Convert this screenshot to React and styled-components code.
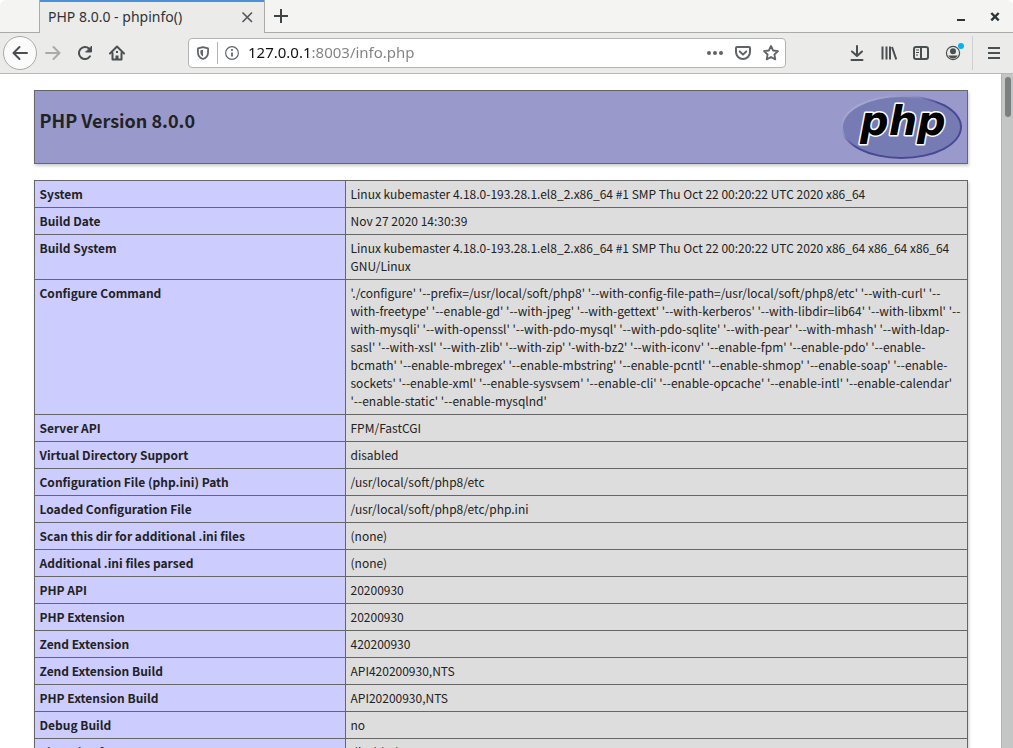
import React, { useState } from "react";
import styled, { createGlobalStyle } from "styled-components";

const rows = [
  ["System", "Linux kubemaster 4.18.0-193.28.1.el8_2.x86_64 #1 SMP Thu Oct 22 00:20:22 UTC 2020 x86_64"],
  ["Build Date", "Nov 27 2020 14:30:39"],
  ["Build System", "Linux kubemaster 4.18.0-193.28.1.el8_2.x86_64 #1 SMP Thu Oct 22 00:20:22 UTC 2020 x86_64 x86_64 x86_64 GNU/Linux"],
  [
    "Configure Command",
    "'./configure' '--prefix=/usr/local/soft/php8' '--with-config-file-path=/usr/local/soft/php8/etc' '--with-curl' '--with-freetype' '--enable-gd' '--with-jpeg' '--with-gettext' '--with-kerberos' '--with-libdir=lib64' '--with-libxml' '--with-mysqli' '--with-openssl' '--with-pdo-mysql' '--with-pdo-sqlite' '--with-pear' '--with-mhash' '--with-ldap-sasl' '--with-xsl' '--with-zlib' '--with-zip' '-with-bz2' '--with-iconv' '--enable-fpm' '--enable-pdo' '--enable-bcmath' '--enable-mbregex' '--enable-mbstring' '--enable-pcntl' '--enable-shmop' '--enable-soap' '--enable-sockets' '--enable-xml' '--enable-sysvsem' '--enable-cli' '--enable-opcache' '--enable-intl' '--enable-calendar' '--enable-static' '--enable-mysqlnd'",
  ],
  ["Server API", "FPM/FastCGI"],
  ["Virtual Directory Support", "disabled"],
  ["Configuration File (php.ini) Path", "/usr/local/soft/php8/etc"],
  ["Loaded Configuration File", "/usr/local/soft/php8/etc/php.ini"],
  ["Scan this dir for additional .ini files", "(none)"],
  ["Additional .ini files parsed", "(none)"],
  ["PHP API", "20200930"],
  ["PHP Extension", "20200930"],
  ["Zend Extension", "420200930"],
  ["Zend Extension Build", "API420200930,NTS"],
  ["PHP Extension Build", "API20200930,NTS"],
  ["Debug Build", "no"],
  ["Thread Safety", "disabled"],
];

function Icon({ size = 16, children, ...rest }) {
  return (
    <svg width={size} height={size} viewBox="0 0 16 16" fill="none" stroke="currentColor" strokeWidth="2" strokeLinecap="round" strokeLinejoin="round" aria-hidden="true" {...rest}>
      {children}
    </svg>
  );
}

function PhpLogo() {
  return (
    <svg width="121" height="64" viewBox="0 0 121 64" role="img" aria-label="PHP logo">
      <defs>
        <linearGradient id="rim" x1="0.2" y1="0" x2="0.8" y2="0.6">
          <stop offset="0" stopColor="#aeb2d5" />
          <stop offset="0.35" stopColor="#8f93c4" />
          <stop offset="0.6" stopColor="#484893" />
          <stop offset="1" stopColor="#484893" />
        </linearGradient>
      </defs>
      <ellipse cx="60.5" cy="32" rx="60.5" ry="32" fill="url(#rim)" />
      <ellipse cx="60.5" cy="32" rx="58.5" ry="30" fill="#777bb3" />
      <LogoText x="19" y="40">php</LogoText>
    </svg>
  );
}

function App() {
  const [url, setUrl] = useState("127.0.0.1:8003/info.php");

  return (
    <Window>
      <GlobalStyle />
      <TabBar>
        <Tab>
          <TabTitle>PHP 8.0.0 - phpinfo()</TabTitle>
          <CloseTab aria-label="Close tab">
            <Icon strokeWidth="1.7"><path d="M4 4l8.500 8.500M12.500 4L4 12.500" /></Icon>
          </CloseTab>
        </Tab>
        <NewTab aria-label="New tab">
          <Icon strokeLinecap="butt"><path d="M8 1v14M1 8h14" /></Icon>
        </NewTab>
        <WindowButtons>
          <TabButton aria-label="Minimize">
            <Icon strokeLinecap="butt"><path d="M4 12h8" /></Icon>
          </TabButton>
          <TabButton aria-label="Close window">
            <Icon strokeLinecap="butt" strokeWidth="2.4"><path d="M4.300 5l7.400 7.400M11.700 5l-7.400 7.400" /></Icon>
          </TabButton>
        </WindowButtons>
      </TabBar>

      <Toolbar>
        <BackButton aria-label="Back">
          <Icon><path d="M15 8H2M7.500 2L1.500 8l6 6" /></Icon>
        </BackButton>
        <ToolButton aria-label="Forward" disabled>
          <Icon><path d="M1 8h13M8.500 2l6 6-6 6" /></Icon>
        </ToolButton>
        <ToolButton aria-label="Reload">
          <Icon>
            <path d="M13 11.300A6 6 0 1 1 12.200 3.800" />
            <path d="M14.500 1.500v5.500h-5.500z" fill="currentColor" strokeWidth="1" />
          </Icon>
        </ToolButton>
        <ToolButton aria-label="Home">
          <Icon>
            <path d="M1 8.500L8 1.500l7 7" />
            <path d="M3.500 8v6.500h9V8" />
            <path d="M8 14v-3.500" strokeWidth="3" strokeLinecap="butt" />
            <path d="M8 6v2" strokeLinecap="butt" />
          </Icon>
        </ToolButton>
        <UrlBar>
          <UrlButton aria-label="Tracking protection">
            <Icon size={14}>
              <path d="M8 1.200L13.800 2.800V7c0 4-2.300 6.500-5.800 7.800C4.500 13.500 2.200 11 2.200 7V2.800z" />
              <path d="M8 4.200L5 5v2c0 2.300 1.200 4 3 5z" fill="currentColor" stroke="none" />
            </Icon>
          </UrlButton>
          <Divider $height={22} />
          <UrlButton aria-label="Site information">
            <Icon size={14} strokeWidth="1.300">
              <circle cx="8" cy="8" r="7.300" />
              <path d="M8 7.500v4.500" strokeWidth="2" strokeLinecap="butt" />
              <circle cx="8" cy="4.600" r="1.200" fill="currentColor" stroke="none" />
            </Icon>
          </UrlButton>
          <UrlInput aria-label="Address" spellCheck="false" value={url} onChange={(e) => setUrl(e.target.value)} />
          <UrlButton aria-label="Page actions">
            <Icon fill="currentColor" stroke="none">
              <circle cx="2" cy="8" r="2" />
              <circle cx="8" cy="8" r="2" />
              <circle cx="14" cy="8" r="2" />
            </Icon>
          </UrlButton>
          <UrlButton aria-label="Save to Pocket">
            <Icon>
              <path d="M2 2h12c.600 0 1 .400 1 1v4a7 7 0 0 1-14 0V3c0-.600.400-1 1-1z" />
              <path d="M4.800 6.500L8 9.600l3.200-3.100" />
            </Icon>
          </UrlButton>
          <UrlButton aria-label="Bookmark this page">
            <Icon strokeWidth="1.800">
              <path d="M8 1l2.100 4.500 4.900.600-3.600 3.400.900 4.900L8 12l-4.300 2.400.900-4.900L1 6.100l4.900-.600z" />
            </Icon>
          </UrlButton>
        </UrlBar>
        <ToolButton aria-label="Downloads">
          <Icon>
            <path d="M8 1v10M3 6.500L8 11l5-4.500M2.500 15h11" />
          </Icon>
        </ToolButton>
        <ToolButton aria-label="Library">
          <Icon strokeLinecap="butt">
            <path d="M1.500 1.500v13M5.500 1.500v13M9 1.500v13M11 2l4.300 12.500" />
          </Icon>
        </ToolButton>
        <ToolButton aria-label="Sidebars">
          <Icon>
            <rect x="1" y="2" width="14" height="12" rx="2" />
            <path d="M8 2v12" strokeLinecap="butt" />
            <path d="M3 5h3M3 7.500h3M3 10h2" strokeWidth="1" strokeLinecap="butt" />
          </Icon>
        </ToolButton>
        <ToolButton aria-label="Account">
          <Icon strokeWidth="1.200">
            <circle cx="8" cy="8" r="6.600" />
            <circle cx="8" cy="6.200" r="3" fill="currentColor" stroke="none" />
            <path d="M3.300 10.500h9.400c-1 1.900-2.600 3-4.700 3s-3.700-1.100-4.700-3z" fill="currentColor" stroke="none" />
          </Icon>
          <Badge />
        </ToolButton>
        <Divider $height={34} $light />
        <ToolButton aria-label="Menu">
          <Icon strokeLinecap="butt"><path d="M2 3h12M2 8h12M2 13h12" /></Icon>
        </ToolButton>
      </Toolbar>

      <Viewport>
        <Page>
          <Banner>
            <h1>PHP Version 8.0.0</h1>
            <a href="http://www.php.net/"><PhpLogo /></a>
          </Banner>
          <InfoTable>
            <tbody>
              {rows.map(([name, value]) => (
                <tr key={name}>
                  <Name scope="row">{name}</Name>
                  <Value>{value}</Value>
                </tr>
              ))}
            </tbody>
          </InfoTable>
        </Page>
        <Scrollbar><Thumb /></Scrollbar>
      </Viewport>
    </Window>
  );
}

const GlobalStyle = createGlobalStyle`
  * {
    box-sizing: border-box;
  }
  body {
    margin: 0;
    background: #fff;
    color: #222;
    font-family: "Noto Sans CJK SC", sans-serif;
  }
  button {
    display: flex;
    align-items: center;
    justify-content: center;
    flex: none;
    padding: 0;
    border: none;
    background: none;
    color: #4a4f51;
  }
`;

const Window = styled.div`
  display: flex;
  flex-direction: column;
  height: 100vh;
  overflow: hidden;
`;

const TabBar = styled.div`
  display: flex;
  flex: none;
  height: 33px;
  padding-left: 39px;
  background: #f4f4f3;
  border-bottom: 1px solid #a9aba9;
  border-radius: 6px 6px 0 0;
`;

const Tab = styled.div`
  display: flex;
  align-items: center;
  justify-content: space-between;
  width: 226px;
  height: 33px;
  padding: 0 9px 0 8px;
  background: #ebebea;
  border: 1px solid #a9aba9;
  border-width: 0 1px;
  box-shadow: inset 0 2px #4a90d9;
`;

const TabTitle = styled.span`
  font: 14px/20px "Noto Sans", sans-serif;
  color: #2e3436;
`;

const TabButton = styled.button`
  width: 16px;
  height: 32px;
  color: #2e3436;
`;

const CloseTab = styled(TabButton)`
  color: #55595b;
`;

const NewTab = styled(TabButton)`
  width: 32px;
  color: #3e4446;
`;

const WindowButtons = styled.div`
  display: flex;
  gap: 18px;
  margin-left: auto;
  padding-right: 10px;
`;

const Toolbar = styled.div`
  display: flex;
  align-items: center;
  flex: none;
  height: 41px;
  padding: 0 3px;
  background: #ebebea;
  border-bottom: 1px solid #b6b8b6;
`;

const ToolButton = styled.button`
  position: relative;
  width: 32px;
  height: 32px;

  &:disabled {
    color: #a9abab;
  }
`;

const BackButton = styled(ToolButton)`
  width: 34px;
  height: 34px;
  background: #fbfbfb;
  border: 1px solid #a9aba9;
  border-radius: 50%;
`;

const Badge = styled.span`
  position: absolute;
  top: 6px;
  right: 5px;
  width: 6px;
  height: 6px;
  border-radius: 50%;
  background: #00b3f4;
`;

const UrlBar = styled.div`
  display: flex;
  align-items: center;
  flex: 1;
  min-width: 0;
  height: 30px;
  margin: 0 55px;
  background: #fff;
  border: 1px solid #b3b5b3;
  border-radius: 4px;
`;

const UrlButton = styled.button`
  width: 28px;
  height: 28px;
  color: #606466;
`;

const Divider = styled.span`
  flex: none;
  width: 1px;
  height: ${(p) => p.$height}px;
  margin: ${(p) => (p.$light ? "0 5px 0 3px" : "0")};
  background: ${(p) => (p.$light ? "#d0d0cf" : "#b3b5b3")};
`;

/* the host is drawn dark, port and path are greyed */
const UrlInput = styled.input`
  flex: 1;
  min-width: 0;
  height: 28px;
  padding: 0 2px 2px;
  border: none;
  outline: none;
  color: #111;
  font: 15px/20px "Noto Sans", sans-serif;
  background: linear-gradient(90deg, #111 66px, #808080 66px);
  background-clip: text;
  -webkit-text-fill-color: transparent;
`;

const Viewport = styled.div`
  display: flex;
  flex: 1;
  min-height: 0;
`;

const Page = styled.main`
  flex: 1;
  min-width: 0;
  padding: 16px;
  overflow: hidden;
`;

const Banner = styled.header`
  display: flex;
  justify-content: space-between;
  max-width: 934px;
  height: 74px;
  margin: 0 auto 16px;
  padding: 4px 5px;
  background: #99c;
  border: 1px solid #666;
  box-shadow: 1px 2px 3px #ccc;

  h1 {
    margin: 12px 0 0;
    font-size: 18px;
    line-height: 27px;
  }
  svg {
    display: block;
  }
`;

const LogoText = styled.text`
  font: italic bold 40px "DejaVu Sans", sans-serif;
  fill: #000;
  stroke: #fff;
  stroke-width: 3px;
  stroke-linejoin: round;
  paint-order: stroke;
`;

const InfoTable = styled.table`
  width: 100%;
  max-width: 934px;
  margin: 0 auto;
  border-collapse: collapse;
  box-shadow: 1px 2px 3px #ccc;
  font-size: 12px;
  line-height: 18px;

  th,
  td {
    padding: 4px 5px;
    border: 1px solid #666;
    text-align: left;
    vertical-align: top;
  }
`;

const Name = styled.th`
  width: 311px;
  background: #ccf;
`;

const Value = styled.td`
  background: #ddd;
  overflow-wrap: anywhere;
`;

const Scrollbar = styled.div`
  flex: none;
  width: 12px;
  padding: 3px 2px;
  background: #c4c6c5;
  border-left: 1px solid #b3b5b3;
`;

const Thumb = styled.div`
  width: 6px;
  height: 40px;
  margin: 0 auto;
  border-radius: 3px;
  background: #7b7f80;
`;

export default App;
